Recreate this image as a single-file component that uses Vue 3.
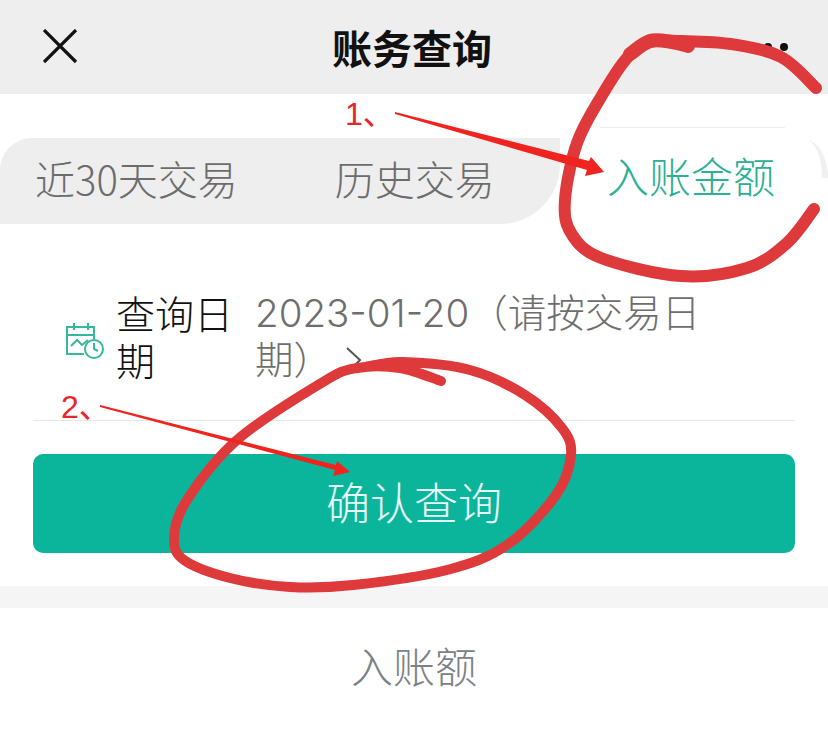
<template>
  <div class="page">
    <header class="nav-bar">
      <button class="nav-btn">
        <svg width="36" height="36" viewBox="0 0 36 36" fill="none" stroke="#111" stroke-width="3.2">
          <path d="M1 1 L33 33 M33 1 L1 33" />
        </svg>
      </button>
      <h1 class="nav-title">账务查询</h1>
      <div class="nav-more">
        <i v-for="n in 3" :key="n" class="dot"></i>
      </div>
    </header>

    <nav class="tabs">
      <div class="tabs-rest">
        <span v-for="tab in tabs" :key="tab" class="tab">{{ tab }}</span>
      </div>
      <div class="tab-active">入账金额</div>
    </nav>

    <section class="form">
      <div class="form-row">
        <svg class="date-icon" width="40" height="40" viewBox="0 0 40 40" fill="none" stroke="#35b89b" stroke-width="2">
          <path d="M20 32 H3 V5 H30 V17" />
          <path d="M3 13 H30 M10 1 V8 M24 1 V8" />
          <path d="M7 24 L13 18 L18 23 L24 18" />
          <circle cx="30" cy="27" r="9" />
          <path d="M30 21 V27 L34 29" />
        </svg>
        <span class="form-label">查询日期</span>
        <span class="form-value">
          2023-01-20（请按交易日期）<svg class="chevron" width="16" height="22" viewBox="0 0 16 22" fill="none" stroke="#555" stroke-width="2"><path d="M1 1 L14 13 L6 21" /></svg>
        </span>
      </div>
      <button class="submit">确认查询</button>
    </section>

    <div class="band"></div>
    <div class="summary">入账额</div>

    <!-- 红色手绘标注 -->
    <div class="marks">
      <svg width="828" height="731" viewBox="0 0 828 731" fill="none" stroke="#de3a3c" stroke-linecap="round" stroke-linejoin="round">
        <path v-for="(d, i) in loops" :key="i" :d="d.path" :stroke-width="d.width" />
        <polygon class="arrow" points="395,112 589,161 591,157 604,172 585,176 587,170 395,114" />
        <polygon class="arrow" points="100,405 336,465 337,461 350,472 333,476 335,470 100,407" />
      </svg>
      <span class="mark-no no-1">1、</span>
      <span class="mark-no no-2">2、</span>
    </div>
  </div>
</template>

<script setup>
const tabs = ['近30天交易', '历史交易']

// 把取样点连成平滑曲线
function smooth(pts) {
  let d = `M${pts[0][0]} ${pts[0][1]}`
  for (let i = 0; i < pts.length - 1; i++) {
    const p0 = pts[i - 1] || pts[i]
    const p1 = pts[i]
    const p2 = pts[i + 1]
    const p3 = pts[i + 2] || p2
    const c1x = p1[0] + (p2[0] - p0[0]) / 6
    const c1y = p1[1] + (p2[1] - p0[1]) / 6
    const c2x = p2[0] - (p3[0] - p1[0]) / 6
    const c2y = p2[1] - (p3[1] - p1[1]) / 6
    d += ` C${c1x} ${c1y} ${c2x} ${c2y} ${p2[0]} ${p2[1]}`
  }
  return d
}

const loops = [
  {
    width: 12,
    path: smooth([
      [816, 88], [781, 57], [731, 44], [681, 41], [650, 42], [627, 58], [601, 97], [577, 143],
      [565, 200], [571, 233], [601, 258], [681, 276], [747, 268], [787, 243], [814, 209]
    ])
  },
  { width: 14, path: smooth([[630, 54], [650, 41], [672, 42], [688, 46]]) },
  {
    width: 10,
    path: smooth([
      [365, 367], [403, 362], [470, 370], [525, 395], [562, 428], [571, 455], [556, 495],
      [507, 545], [447, 570], [353, 585], [290, 587], [230, 578], [184, 560], [174, 537],
      [187, 500], [237, 440], [323, 382], [357, 368], [400, 368], [441, 381]
    ])
  }
]
</script>

<style scoped>
.page {
  position: relative;
  width: 828px;
  height: 731px;
  overflow: hidden;
  background: #fff;
  font-family: "Noto Sans CJK SC", sans-serif;
}

.nav-bar {
  display: flex;
  align-items: center;
  justify-content: space-between;
  height: 94px;
  padding: 0 40px 0 43px;
  box-sizing: border-box;
  background: #eeeeee;
}

.nav-btn {
  display: flex;
  width: 113px;
  padding: 0;
  border: 0;
  background: none;
}

.nav-title {
  margin: 0;
  font-size: 40px;
  font-weight: 700;
  line-height: 1;
  color: #111;
}

.nav-more {
  display: flex;
  justify-content: flex-end;
  gap: 8px;
  width: 120px;
}

.dot {
  width: 8px;
  height: 8px;
  border-radius: 50%;
  background: #111;
}

.tabs {
  position: relative;
  display: flex;
  height: 86px;
  margin-top: 44px;
}

.tabs-rest {
  display: flex;
  align-items: center;
  gap: 97px;
  width: 560px;
  padding: 0 0 6px 35px;
  box-sizing: border-box;
  background: #eeeeee;
  border-radius: 32px 0 60px 0;
}

.tab {
  font-size: 40px;
  font-weight: 300;
  color: #6c6c6c;
  white-space: nowrap;
}

.tab-active {
  flex: 1;
  display: flex;
  align-items: center;
  justify-content: center;
  padding: 0 6px 14px 0;
  font-size: 42px;
  font-weight: 300;
  color: #2bb093;
}

/* 右上角的灰色弧边 */
.tab-active::after {
  content: "";
  position: absolute;
  top: 2px;
  right: 0;
  width: 22px;
  height: 38px;
  box-sizing: border-box;
  border-right: 6px solid #f0f0f0;
  border-radius: 0 100% 0 0;
}

.tab-active::before {
  content: "";
  position: absolute;
  top: -11px;
  left: 600px;
  width: 185px;
  height: 1px;
  background: #ececec;
}

.form {
  padding: 0 33px;
}

.form-row {
  display: flex;
  align-items: center;
  height: 197px;
  padding: 27px 0 0 31px;
  box-sizing: border-box;
  border-bottom: 1px solid #e6e6e6;
}

.date-icon {
  flex: none;
  margin-top: 12px;
}

.form-label {
  flex: none;
  width: 120px;
  margin-left: 12px;
  font-size: 39px;
  font-weight: 300;
  line-height: 47px;
  color: #111;
}

.form-value {
  width: 465px;
  margin: 3px 0 0 19px;
  font-family: Inter, "Noto Sans CJK SC", sans-serif;
  font-size: 38.5px;
  font-weight: 300;
  line-height: 47px;
  color: #6e6e6e;
}

.chevron {
  margin-left: 14px;
  vertical-align: 5px;
}

.submit {
  display: block;
  width: 100%;
  height: 99px;
  margin-top: 33px;
  padding: 0 0 6px;
  border: 0;
  border-radius: 10px;
  background: #0bb59c;
  font-family: inherit;
  font-size: 44px;
  font-weight: 300;
  color: #e6fbf7;
}

.band {
  height: 22px;
  margin-top: 33px;
  background: #f5f5f5;
}

.summary {
  margin-top: 27px;
  font-size: 42px;
  font-weight: 300;
  line-height: 60px;
  text-align: center;
  color: #7b8287;
}

.marks {
  position: absolute;
  inset: 0;
  pointer-events: none;
}

.arrow {
  fill: #f0231f;
  stroke: none;
}

.mark-no {
  position: absolute;
  font-family: "Liberation Sans", "Noto Sans CJK SC", sans-serif;
  font-size: 32px;
  line-height: 36px;
  color: #e8262a;
}

.no-1 {
  top: 96px;
  left: 345px;
}

.no-2 {
  top: 389px;
  left: 61px;
}
</style>
